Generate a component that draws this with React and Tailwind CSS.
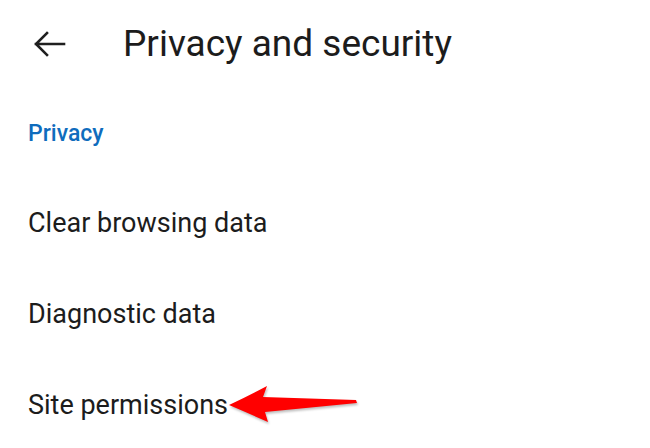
import React from "react";

const BackArrow = () => (
  <svg width="36" height="30" viewBox="0 0 36 30" className="shrink-0">
    <path
      d="M5 15H33M16 4L5 15L16 26"
      fill="none"
      stroke="#1f1f1f"
      strokeWidth="2.6"
      strokeLinecap="square"
    />
  </svg>
);

const RedArrow = () => (
  <svg width="132" height="40" viewBox="0 0 132 40" className="shrink-0 drop-shadow-[1px_2px_1px_rgba(0,0,0,0.25)]">
    <path
      d="M1 20 Q22 10 39 1 L35 12 L128 15 L129 18 L37 27 L40 37 Q22 29 1 20 Z"
      fill="#ff0000"
    />
  </svg>
);

const Row = ({ children }) => (
  <div className="flex items-center h-[32px] pl-[28px] text-[27px] leading-[32px] text-[#1c1c1c]">
    {children}
  </div>
);

export default function App() {
  return (
    <div
      className="w-[650px] h-[448px] bg-white overflow-hidden"
      style={{ fontFamily: "Roboto, 'Noto Sans', sans-serif" }}
    >
      {/* top bar */}
      <div className="flex items-center h-[44px] mt-[22px] pl-[31px]">
        <BackArrow />
        <h1 className="ml-[56px] text-[37px] leading-[44px] font-normal text-[#1c1c1c]">
          Privacy and security
        </h1>
      </div>

      {/* section title */}
      <div className="mt-[54px] pl-[28px] text-[23px] leading-[28px] font-medium text-[#0f6cbd]">
        Privacy
      </div>

      <div className="flex flex-col gap-[59px] mt-[59px]">
        <Row>Clear browsing data</Row>
        <Row>Diagnostic data</Row>
        <Row>
          <span>Site permissions</span>
          <RedArrow />
        </Row>
      </div>
    </div>
  );
}
